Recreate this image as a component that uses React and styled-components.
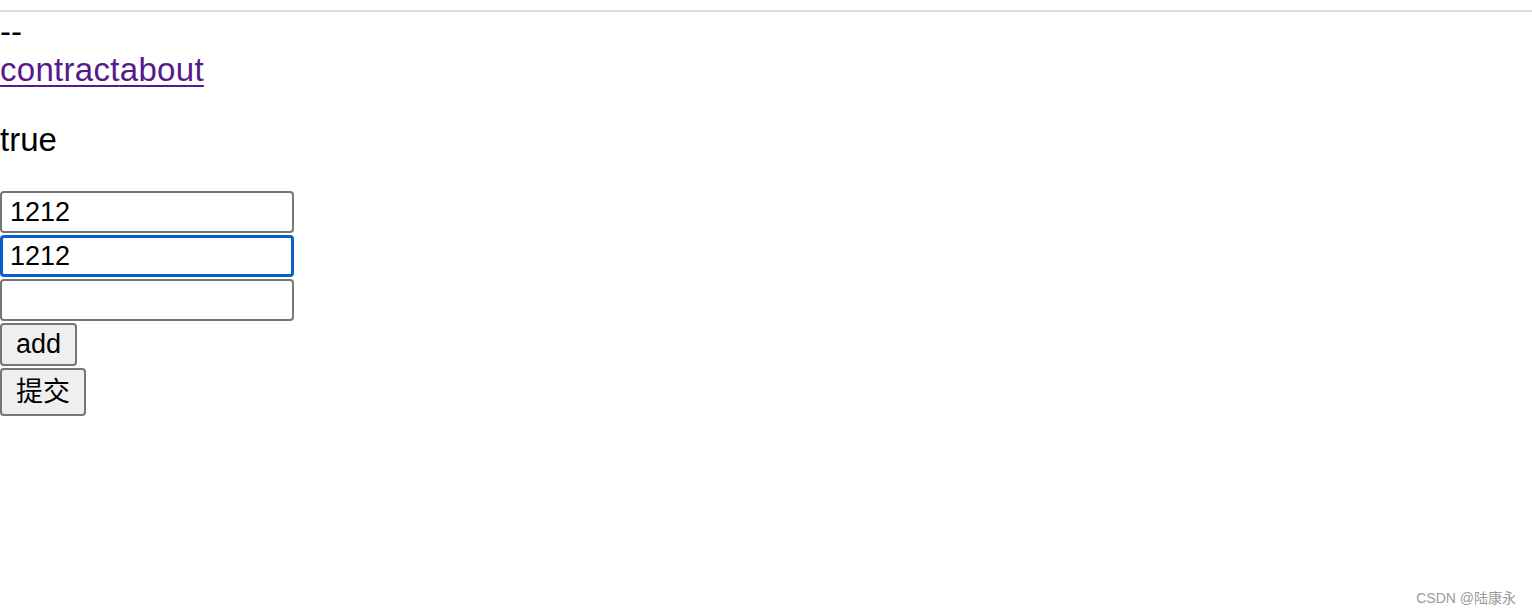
import React from "react";
import styled, { createGlobalStyle } from "styled-components";

const GlobalStyle = createGlobalStyle`
  body {
    margin: 0;
    background: #fff;
    font-family: "Liberation Sans", Arial, "Noto Sans CJK SC", sans-serif;
    font-size: 33px;
    line-height: 38px;
    color: #000;
  }
`;

const Page = styled.div`
  position: relative;
  height: 614px;
  overflow: hidden;
`;

const Divider = styled.div`
  margin-top: 10px;
  margin-bottom: 1px;
  border-top: 2px solid #dcdcdc;
`;

const Line = styled.div`
  height: 38px;
`;

const NavLink = styled.a`
  color: #551a8b;
  text-decoration: underline;
  text-decoration-thickness: 2px;
  text-underline-offset: 4px;
  letter-spacing: 0.3px;
`;

const Status = styled.p`
  margin: 32px 0;
`;

const Form = styled.div`
  display: flex;
  flex-direction: column;
  align-items: flex-start;
  gap: 2px;
`;

const Field = styled.input`
  box-sizing: border-box;
  width: 294px;
  height: 42px;
  margin: 0;
  font-family: "Liberation Sans", Arial, sans-serif;
  font-size: 27px;
  color: #000;
  background: #fff;
  border-style: solid;
  border-color: ${(p) => (p.$focused ? "#0b5fcc" : "#767676")};
  border-width: ${(p) => (p.$focused ? "3px" : "2px")};
  padding: 0 ${(p) => (p.$focused ? "7px" : "8px")};
  border-radius: 4px;
  outline: none;
`;

const Button = styled.button`
  box-sizing: border-box;
  height: ${(p) => (p.$cjk ? "48px" : "43px")};
  margin: 0;
  padding: 0 14px;
  font-family: "Liberation Sans", Arial, "Noto Sans CJK SC", sans-serif;
  font-size: 27px;
  line-height: 1;
  color: #000;
  background: #efefef;
  border: 2px solid #767676;
  border-radius: 4px;
`;

const Watermark = styled.div`
  position: absolute;
  right: 16px;
  bottom: 8px;
  font-family: "Liberation Sans", Arial, "Noto Sans CJK SC", sans-serif;
  font-size: 14px;
  line-height: 16px;
  color: #9a9a9a;
`;

export default function App() {
  return (
    <>
      <GlobalStyle />
      <Page>
        <Divider />
        <Line>--</Line>
        <Line>
          <NavLink href="#contract">contract</NavLink>
          <NavLink href="#about">about</NavLink>
        </Line>
        <Status>true</Status>
        <Form>
          <Field defaultValue="1212" />
          <Field defaultValue="1212" $focused />
          <Field defaultValue="" />
          <Button>add</Button>
          <Button $cjk>提交</Button>
        </Form>
        <Watermark>CSDN @陆康永</Watermark>
      </Page>
    </>
  );
}
